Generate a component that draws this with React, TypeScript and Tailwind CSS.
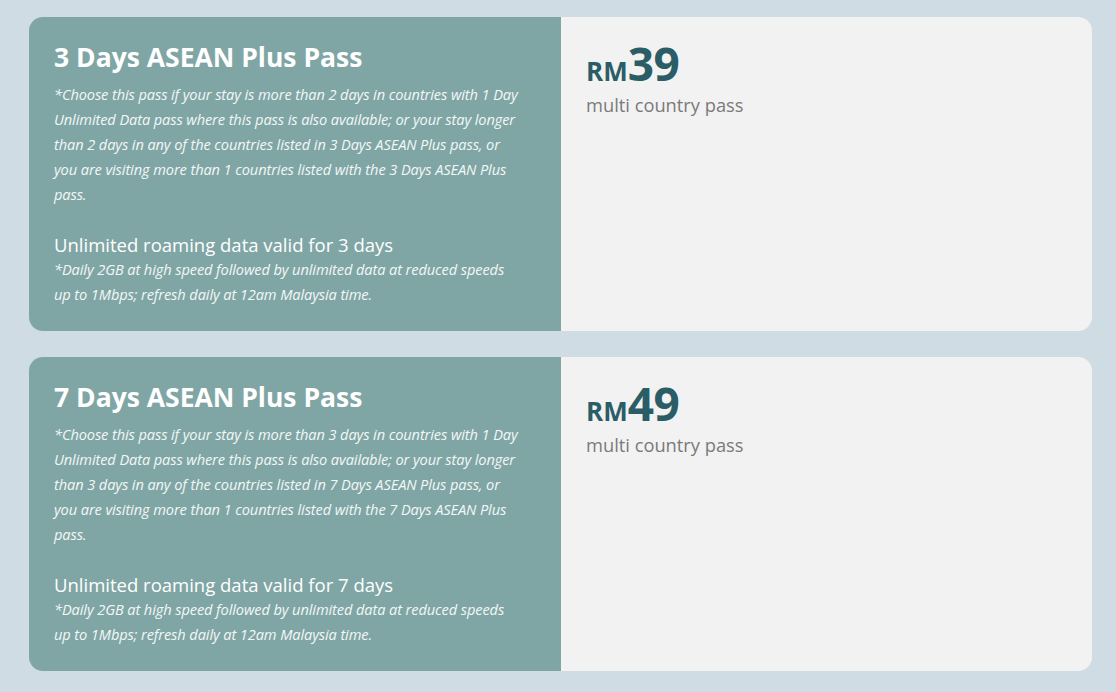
import React from "react";

const passes = [
  { days: 3, prev: 2, price: "39" },
  { days: 7, prev: 3, price: "49" },
];

export default function App() {
  return (
    <div
      className="w-[1116px] h-[692px] bg-[#cfdce4] pt-[17px] pl-[29px] flex flex-col gap-[26px] overflow-hidden"
      style={{ fontFamily: "'Open Sans', Lato, sans-serif" }}
    >
      {passes.map((p) => (
        <div key={p.days} className="w-[1063px] h-[314px] rounded-[14px] overflow-hidden flex">
          <div className="w-[532px] bg-[#7fa6a5] pl-[25px] pr-[5px] pt-[24px] text-white whitespace-nowrap">
            <h2 className="text-[26.5px] leading-[32px] font-bold tracking-[0px]">{p.days} Days ASEAN Plus Pass</h2>
            <p className="italic text-[14.6px] leading-[25px] mt-[9px] text-[#f4f7f7] tracking-[-0.1px]">
              *Choose this pass if your stay is more than {p.prev} days in countries with 1 Day
              <br />
              Unlimited Data pass where this pass is also available; or your stay longer
              <br />
              than {p.prev} days in any of the countries listed in {p.days} Days ASEAN Plus pass, or
              <br />
              you are visiting more than 1 countries listed with the {p.days} Days ASEAN Plus
              <br />
              pass.
            </p>
            <p className="text-[18.5px] leading-[25px] mt-[25px]">Unlimited roaming data valid for {p.days} days</p>
            <p className="italic text-[14.6px] leading-[25px] text-[#f4f7f7] tracking-[-0.1px]">
              *Daily 2GB at high speed followed by unlimited data at reduced speeds
              <br />
              up to 1Mbps; refresh daily at 12am Malaysia time.
            </p>
          </div>
          <div className="flex-1 bg-[#f2f2f2] pl-[25px] pt-[21px]">
            <div className="text-[#2a5d66] font-bold leading-[50px]">
              <span className="text-[26px]">RM</span>
              <span className="text-[46px] tracking-[-0.5px]">{p.price}</span>
            </div>
            <div className="text-[18.3px] leading-[18px] -mt-[4px] text-[#7a7a7a]">multi country pass</div>
          </div>
        </div>
      ))}
    </div>
  );
}
